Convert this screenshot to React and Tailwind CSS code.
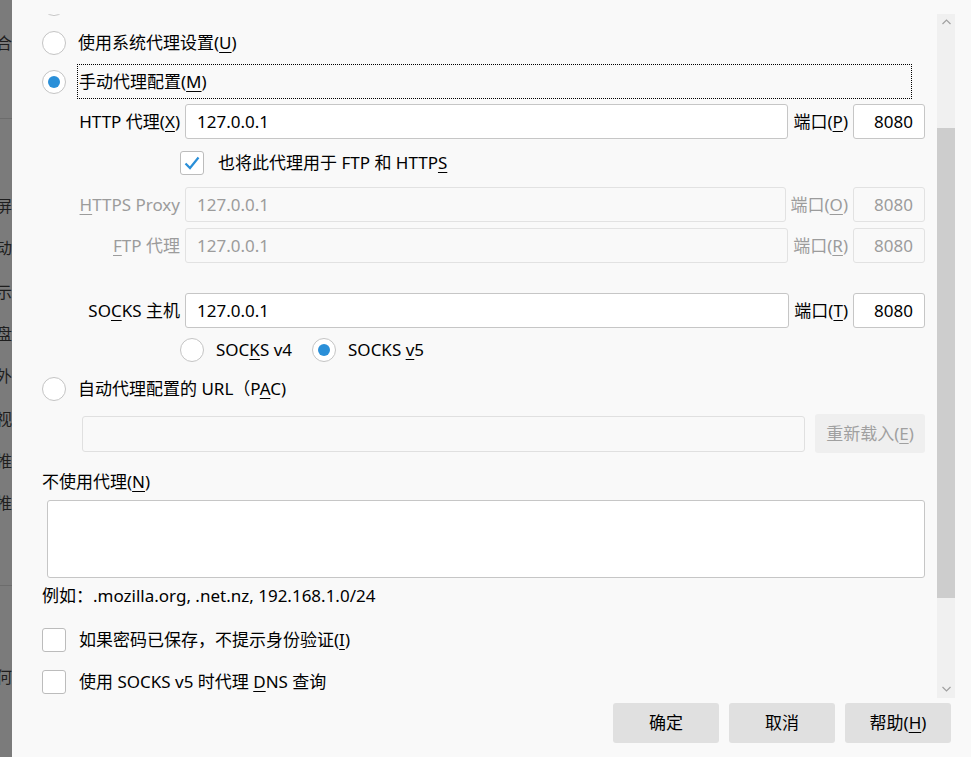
import React from 'react';

const Radio = ({ checked }) => (
  <div className="w-[24px] h-[24px] shrink-0 rounded-full border border-[#c4c4c4] bg-white flex items-center justify-center">
    {checked && <div className="w-[12px] h-[12px] rounded-full bg-[#2a8fd8]" />}
  </div>
);

const Checkbox = ({ checked }) => (
  <div className="w-[24px] h-[24px] shrink-0 rounded-[3px] border border-[#bcbcbc] bg-white flex items-center justify-center">
    {checked && (
      <svg width="18" height="18" viewBox="0 0 18 18">
        <path d="M2.5 9.5 L7 14 L15.5 3.5" fill="none" stroke="#2a8fd8" strokeWidth="2.2" />
      </svg>
    )}
  </div>
);

const Field = ({ value, disabled, className = '', right }) => (
  <div
    className={
      'h-[35px] rounded-[3px] border flex items-center px-[11px] ' +
      (right ? 'justify-end ' : '') +
      (disabled ? 'border-[#e2e2e2] bg-[#f9f9f9] text-[#9c9c9c] ' : 'border-[#c6c6c6] bg-white text-black ') +
      className
    }
  >
    {value}
  </div>
);

const ProxyRow = ({ label, port, disabled, className = '' }) => (
  <div className={'h-[35px] flex items-center ' + className}>
    <div className={'w-[138px] shrink-0 text-right whitespace-nowrap ' + (disabled ? 'text-[#9c9c9c]' : 'text-black')}>{label}</div>
    <Field value="127.0.0.1" disabled={disabled} className="flex-1 ml-[5px]" />
    <div className={'shrink-0 px-[5px] ' + (disabled ? 'text-[#9c9c9c]' : 'text-black')}>{port}</div>
    <Field value="8080" disabled={disabled} right className="w-[72px] shrink-0" />
  </div>
);

const U = ({ children }) => <span className="underline underline-offset-[3px] decoration-1">{children}</span>;

const SideChar = ({ ch, className = '' }) => (
  <div className={'h-[24px] leading-[24px] whitespace-nowrap ml-[-4px] text-[#1e1e1e] ' + className}>{ch}</div>
);

export default function App() {
  return (
    <div className="w-[971px] h-[757px] flex overflow-hidden bg-[#f9f9f9] text-[17px] text-black font-['Noto_Sans','Noto_Sans_CJK_SC',sans-serif]">
      {/* page behind the dialog */}
      <div className="w-[12px] shrink-0 bg-[#7b7b7b] overflow-hidden flex flex-col text-[16px]">
        <SideChar ch="合计" className="mt-[31px]" />
        <div className="h-px bg-[#6c6c6c] mt-[63px]" />
        <SideChar ch="屏" className="mt-[75px]" />
        <SideChar ch="动" className="mt-[18px]" />
        <SideChar ch="示" className="mt-[20px]" />
        <SideChar ch="盘" className="mt-[18px]" />
        <SideChar ch="外" className="mt-[18px]" />
        <SideChar ch="视" className="mt-[19px]" />
        <SideChar ch="推" className="mt-[18px]" />
        <SideChar ch="推" className="mt-[18px]" />
        <div className="h-px bg-[#6c6c6c] mt-[70px]" />
        <SideChar ch="何" className="mt-[79px]" />
      </div>

      {/* dialog */}
      <div className="flex-1 flex flex-col">
        <div className="h-[14px] shrink-0" />
        <div className="h-[684px] shrink-0 flex">
          <div className="flex-1 overflow-hidden pl-[30px] pr-[12px]">
            <div className="mt-[-30px] flex flex-col">
              <div className="h-[39px] flex items-center gap-[12px]">
                <Radio />
                <span>使用无代理</span>
              </div>
              <div className="h-[39px] flex items-center gap-[12px]">
                <Radio />
                <span>使用系统代理设置(<U>U</U>)</span>
              </div>
              <div className="h-[39px] flex items-center gap-[11px]">
                <Radio checked />
                <div className="flex-1 mr-[13px] h-[35px] border border-dotted border-black flex items-center pl-[1px]">
                  手动代理配置(<U>M</U>)
                </div>
              </div>

              <ProxyRow label={<>HTTP 代理(<U>X</U>)</>} port={<>端口(<U>P</U>)</>} className="mt-[3px]" />

              <div className="h-[48px] flex items-center pl-[138px] gap-[14px]">
                <Checkbox checked />
                <span>也将此代理用于 FTP 和 HTTP<U>S</U></span>
              </div>

              <ProxyRow disabled label={<><U>H</U>TTPS Proxy</>} port={<>端口(<U>O</U>)</>} />
              <ProxyRow disabled label={<><U>F</U>TP 代理</>} port={<>端口(<U>R</U>)</>} className="mt-[6px]" />

              <ProxyRow label={<>SO<U>C</U>KS 主机</>} port={<>端口(<U>T</U>)</>} className="mt-[30px]" />

              <div className="h-[44px] flex items-center pl-[138px]">
                <Radio />
                <span className="ml-[12px]">SOC<U>K</U>S v4</span>
                <div className="ml-[20px]">
                  <Radio checked />
                </div>
                <span className="ml-[12px]">SOCKS <U>v</U>5</span>
              </div>

              <div className="h-[34px] flex items-center gap-[12px]">
                <Radio />
                <span>自动代理配置的 URL（P<U>A</U>C)</span>
              </div>

              <div className="h-[39px] mt-[8px] flex items-center pl-[40px] gap-[10px]">
                <div className="flex-1 h-[36px] rounded-[3px] border border-[#e0e0e0] bg-[#f9f9f9]" />
                <div className="w-[110px] h-[39px] shrink-0 rounded-[3px] bg-[#efefef] text-[#a0a0a0] flex items-center justify-center whitespace-nowrap">
                  重新载入(<U>E</U>)
                </div>
              </div>

              <div className="h-[47px] pt-[11px] flex items-center">不使用代理(<U>N</U>)</div>
              <div className="h-[78px] ml-[5px] rounded-[3px] border border-[#c6c6c6] bg-white" />
              <div className="h-[36px] flex items-center">例如：.mozilla.org, .net.nz, 192.168.1.0/24</div>

              <div className="h-[52px] flex items-center gap-[13px]">
                <Checkbox />
                <span>如果密码已保存，不提示身份验证(<U>I</U>)</span>
              </div>
              <div className="h-[32px] flex items-center gap-[13px]">
                <Checkbox />
                <span>使用 SOCKS v5 时代理 <U>D</U>NS 查询</span>
              </div>
            </div>
          </div>

          {/* scrollbar */}
          <div className="w-[18px] shrink-0 bg-[#f0f0f0] flex flex-col">
            <div className="h-[114px] flex justify-center pt-[5px]">
              <svg width="9" height="6" viewBox="0 0 9 6">
                <path d="M0.5 5 L4.5 1 L8.5 5" fill="none" stroke="#a0a0a0" strokeWidth="1.2" />
              </svg>
            </div>
            <div className="h-[470px] bg-[#cdcdcd]" />
            <div className="flex-1 flex justify-center items-end pb-[6px]">
              <svg width="9" height="6" viewBox="0 0 9 6">
                <path d="M0.5 1 L4.5 5 L8.5 1" fill="none" stroke="#a0a0a0" strokeWidth="1.2" />
              </svg>
            </div>
          </div>
          <div className="w-[16px] shrink-0" />
        </div>

        {/* footer buttons */}
        <div className="flex-1 flex justify-end items-start pt-[5px] pr-[20px] gap-[10px]">
          <div className="w-[106px] h-[40px] rounded-[3px] bg-[#e0e0e0] flex items-center justify-center">确定</div>
          <div className="w-[106px] h-[40px] rounded-[3px] bg-[#e0e0e0] flex items-center justify-center">取消</div>
          <div className="w-[106px] h-[40px] rounded-[3px] bg-[#e0e0e0] flex items-center justify-center">
            帮助(<U>H</U>)
          </div>
        </div>
      </div>
    </div>
  );
}
